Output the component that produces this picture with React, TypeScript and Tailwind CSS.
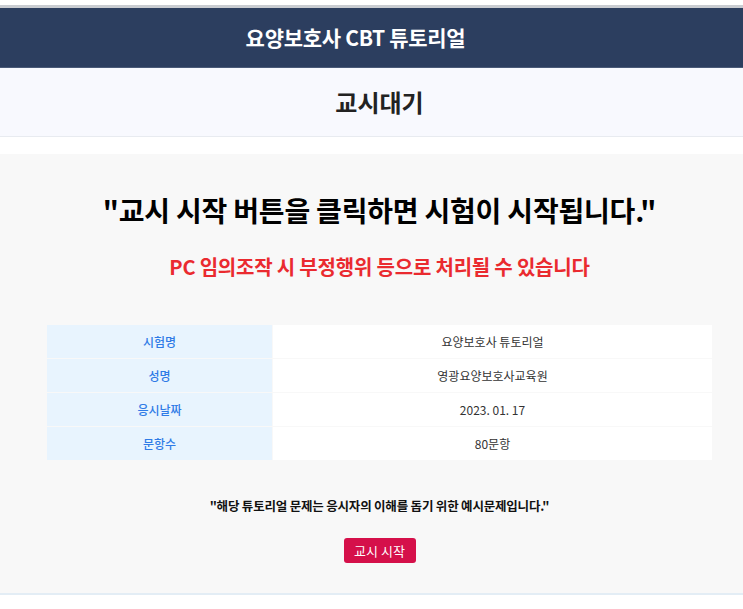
import React from "react";

const rows = [
  { label: "시험명", value: "요양보호사 튜토리얼" },
  { label: "성명", value: "영광요양보호사교육원" },
  { label: "응시날짜", value: "2023. 01. 17" },
  { label: "문항수", value: "80문항" },
];

export default function App() {
  return (
    <div
      className="min-h-screen bg-white"
      style={{ fontFamily: '"Noto Sans CJK KR", "Noto Sans", sans-serif' }}
    >
      <div className="h-[5px] bg-white" />
      <div className="h-[3px] bg-[#c9ccd1]" />
      <header className="h-[59px] bg-[#2c3e5f] flex items-center justify-center pr-[32px]">
        <h1 className="text-[21px] font-bold text-white tracking-[-0.3px]">
          요양보호사 CBT 튜토리얼
        </h1>
      </header>
      <div className="h-[70px] bg-[#f8f9fe] border-t border-[#4a5a78] border-b border-b-[#e8ebf0] flex items-center justify-center pl-[16px]">
        <h2 className="text-[24px] font-bold text-[#222]">교시대기</h2>
      </div>
      <div className="h-[17px]" />
      <main className="bg-[#f8f8f8] border-b-2 border-[#e3edf5] pl-[16px] pt-[35px] pb-[30px] flex flex-col items-center">
        <p className="text-[28px] font-bold text-black tracking-[-0.2px]">
          "교시 시작 버튼을 클릭하면 시험이 시작됩니다."
        </p>
        <p className="mt-[21px] text-[20px] font-bold text-[#ea2a2f] tracking-[-0.2px]">
          PC 임의조작 시 부정행위 등으로 처리될 수 있습니다
        </p>
        <div className="mt-[43px] w-[665px] flex flex-col gap-[1px]">
          {rows.map((r) => (
            <div key={r.label} className="flex h-[33px] gap-[1px]">
              <div className="w-[225px] bg-[#e8f4fe] flex items-center justify-center text-[12px] font-medium text-[#2f7be6]">
                {r.label}
              </div>
              <div className="flex-1 bg-white flex items-center justify-center text-[12px] text-[#333]">
                {r.value}
              </div>
            </div>
          ))}
        </div>
        <p className="mt-[37px] text-[12.5px] font-bold text-[#111] tracking-[-0.2px]">
          "해당 튜토리얼 문제는 응시자의 이해를 돕기 위한 예시문제입니다."
        </p>
        <button className="mt-[22px] h-[25px] w-[72px] rounded-[3px] bg-[#d5104a] text-white text-[13px] flex items-center justify-center">
          교시 시작
        </button>
      </main>
    </div>
  );
}
